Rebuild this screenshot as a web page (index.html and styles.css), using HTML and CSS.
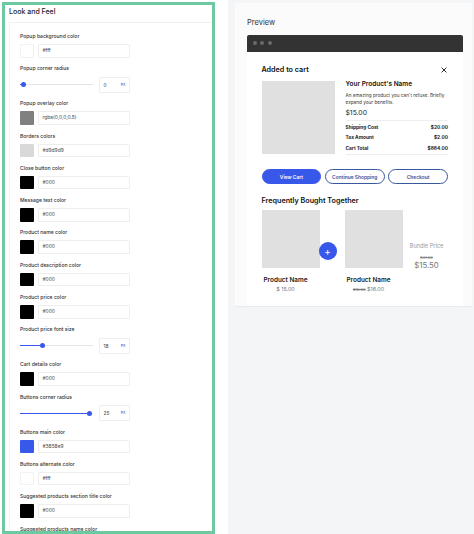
FILE: index.html
```html
<!DOCTYPE html>
<html lang="en">
<head>
  <meta charset="UTF-8" />
  <title>Look and Feel</title>
  <link rel="stylesheet" href="styles.css">
</head>
<body>
  <div class="page">
    <section class="settings">
      <h2 class="settings-title">Look and Feel</h2>
      <div class="settings-body">
        <div class="field">
          <label>Popup background color</label>
          <div class="color-row"><span class="swatch swatch-white"></span><span class="text-input">#fff</span></div>
        </div>
        <div class="field field-range">
          <label>Popup corner radius</label>
          <div class="range-row">
            <div class="track"><span class="fill fill-0"></span><span class="thumb"></span></div>
            <div class="px-input"><span>0</span><span class="unit">PX</span></div>
          </div>
        </div>
        <div class="field">
          <label>Popup overlay color</label>
          <div class="color-row"><span class="swatch swatch-overlay"></span><span class="text-input">rgba(0,0,0,0.5)</span></div>
        </div>
        <div class="field">
          <label>Borders colors</label>
          <div class="color-row"><span class="swatch swatch-border"></span><span class="text-input">#d9d9d9</span></div>
        </div>
        <div class="field">
          <label>Close button color</label>
          <div class="color-row"><span class="swatch"></span><span class="text-input">#000</span></div>
        </div>
        <div class="field">
          <label>Message text color</label>
          <div class="color-row"><span class="swatch"></span><span class="text-input">#000</span></div>
        </div>
        <div class="field">
          <label>Product name color</label>
          <div class="color-row"><span class="swatch"></span><span class="text-input">#000</span></div>
        </div>
        <div class="field">
          <label>Product description color</label>
          <div class="color-row"><span class="swatch"></span><span class="text-input">#000</span></div>
        </div>
        <div class="field">
          <label>Product price color</label>
          <div class="color-row"><span class="swatch"></span><span class="text-input">#000</span></div>
        </div>
        <div class="field field-range">
          <label>Product price font size</label>
          <div class="range-row">
            <div class="track"><span class="fill fill-30"></span><span class="thumb"></span></div>
            <div class="px-input"><span>18</span><span class="unit">PX</span></div>
          </div>
        </div>
        <div class="field">
          <label>Cart details color</label>
          <div class="color-row"><span class="swatch"></span><span class="text-input">#000</span></div>
        </div>
        <div class="field field-range">
          <label>Buttons corner radius</label>
          <div class="range-row">
            <div class="track"><span class="fill fill-100"></span><span class="thumb"></span></div>
            <div class="px-input"><span>25</span><span class="unit">PX</span></div>
          </div>
        </div>
        <div class="field">
          <label>Buttons main color</label>
          <div class="color-row"><span class="swatch swatch-blue"></span><span class="text-input">#3858e9</span></div>
        </div>
        <div class="field">
          <label>Buttons alternate color</label>
          <div class="color-row"><span class="swatch swatch-white"></span><span class="text-input">#fff</span></div>
        </div>
        <div class="field">
          <label>Suggested products section title color</label>
          <div class="color-row"><span class="swatch"></span><span class="text-input">#000</span></div>
        </div>
        <div class="field field-last">
          <label>Suggested products name color</label>
        </div>
      </div>
    </section>

    <section class="preview-area">
      <div class="preview">
        <h2 class="preview-title">Preview</h2>
        <div class="window">
          <div class="window-bar"><span></span><span></span><span></span></div>
          <div class="popup">
            <div class="popup-head">
              <h3>Added to cart</h3>
              <svg class="close" viewBox="0 0 10 10" width="6" height="6"><path d="M1 1l8 8M9 1l-8 8" stroke="#111" stroke-width="1.5" fill="none"/></svg>
            </div>
            <div class="product">
              <div class="placeholder product-image"></div>
              <div class="product-info">
                <h4>Your Product's Name</h4>
                <p class="desc">An amazing product you can't refuse. Briefly expand your benefits.</p>
                <p class="price">$15.00</p>
                <div class="totals">
                  <div class="total-row"><span>Shipping Cost</span><span>$20.00</span></div>
                  <div class="total-row"><span>Tax Amount</span><span>$2.00</span></div>
                  <div class="total-row"><span>Cart Total</span><span>$884.00</span></div>
                </div>
              </div>
            </div>
            <div class="buttons">
              <button class="btn btn-main">View Cart</button>
              <button class="btn">Continue Shopping</button>
              <button class="btn">Checkout</button>
            </div>
            <h3 class="together">Frequently Bought Together</h3>
            <div class="bundle">
              <div class="bundle-item">
                <div class="placeholder bundle-image"></div>
                <div class="bundle-name">Product Name</div>
                <div class="bundle-price">$ 15.00</div>
                <span class="plus">+</span>
              </div>
              <div class="bundle-item bundle-item-last">
                <div class="placeholder bundle-image"></div>
                <div class="bundle-name">Product Name</div>
                <div class="bundle-price"><s>$18.00</s> $16.00</div>
              </div>
              <div class="bundle-total">
                <div class="bundle-label">Bundle Price</div>
                <s class="bundle-was">$31.00</s>
                <div class="bundle-sum">$15.50</div>
              </div>
            </div>
          </div>
        </div>
      </div>
    </section>
  </div>
</body>
</html>
```

FILE: styles.css
```css
* {
  box-sizing: border-box;
}

body {
  margin: 0;
  height: 534px;
  overflow: hidden;
  background: #fff;
  font-family: Inter, "Liberation Sans", sans-serif;
  color: #1e1e1e;
}

.page {
  display: flex;
  height: 534px;
  overflow: hidden;
}

.settings {
  flex: none;
  width: 213px;
  height: 532px;
  margin: 2px 0 0 2px;
  border: 3px solid #6fc9a0;
  overflow: hidden;
  background: #fff;
}

.settings-title {
  margin: 0;
  height: 17px;
  padding: 2px 0 0 4px;
  font-size: 7px;
  line-height: 10px;
  font-weight: 500;
}

.settings-body {
  margin-left: 4px;
  padding: 10px 0 0 10px;
  border-top: 1px solid #f0f0f0;
  border-left: 1px solid #f4f4f4;
}

.field {
  margin-bottom: 7.8px;
}

.field-range {
  margin-bottom: 7px;
}

.field-last {
  margin-bottom: 0;
}

.field label {
  display: block;
  height: 7px;
  margin-bottom: 4px;
  font-size: 5.05px;
  line-height: 7px;
  font-weight: 500;
  color: #333;
  white-space: nowrap;
}

.color-row {
  display: flex;
  gap: 4px;
}

.swatch {
  flex: none;
  width: 13.5px;
  height: 13.5px;
  border-radius: 1px;
  background: #000;
}

.swatch-white {
  background: #fff;
  border: 1px solid #f2f2f2;
}

.swatch-overlay {
  background: #808080;
}

.swatch-border {
  background: #d9d9d9;
}

.swatch-blue {
  background: #3858e9;
}

.text-input {
  width: 92.5px;
  height: 13.5px;
  padding-left: 4px;
  border: 1px solid #eeeeee;
  border-radius: 1px;
  font-size: 4.9px;
  line-height: 11.5px;
  color: #444;
}

.range-row {
  display: flex;
  align-items: center;
  gap: 6px;
  height: 17px;
}

.track {
  position: relative;
  width: 72.5px;
  height: 1px;
  background: #e4e4e4;
}

.fill {
  display: block;
  height: 1px;
  background: #3858e9;
}

.fill-0 {
  width: 3px;
}

.fill-30 {
  width: 22px;
}

.fill-100 {
  width: 69px;
}

.thumb {
  position: absolute;
  top: -2px;
  width: 5px;
  height: 5px;
  border-radius: 50%;
  background: #3858e9;
}

.fill-0 + .thumb {
  left: 1px;
}

.fill-30 + .thumb {
  left: 19.5px;
}

.fill-100 + .thumb {
  left: 66.5px;
}

.px-input {
  display: flex;
  justify-content: space-between;
  align-items: center;
  width: 31px;
  height: 16px;
  padding: 0 3px 0 4px;
  border: 1px solid #eeeeee;
  border-radius: 1px;
  font-size: 4.9px;
  color: #444;
}

.unit {
  font-size: 3.4px;
  font-weight: 600;
  color: #5b75c9;
}

.preview-area {
  flex: 1;
  min-width: 0;
  margin-left: 13px;
  padding: 3px 2px 0 7px;
  background: #f4f5f7;
}

.preview {
  height: 304px;
  padding: 15px 9px 0 12px;
  background: #fbfbfc;
  border-bottom: 1px solid #e8eaec;
}

.preview-title {
  margin: 0 0 8px;
  height: 9px;
  font-size: 7.5px;
  line-height: 9px;
  font-weight: 400;
  color: #333;
}

.window {
  height: 271px;
  background: #fff;
}

.window-bar {
  display: flex;
  align-items: center;
  gap: 3.3px;
  height: 16.5px;
  padding-left: 6px;
  background: #333;
  border-radius: 2px 2px 0 0;
}

.window-bar span {
  width: 4px;
  height: 4px;
  border-radius: 50%;
  background: #6b6b6b;
}

.popup {
  padding: 12.5px 15px 0 14.5px;
  background: #fff;
}

.popup-head {
  display: flex;
  justify-content: space-between;
  align-items: center;
  height: 12px;
  margin-bottom: 4.5px;
}

.popup-head h3,
.together {
  margin: 0;
  font-size: 7.2px;
  line-height: 12px;
  font-weight: 600;
  color: #111;
}

.close {
  margin-right: 1px;
}

.product {
  display: flex;
  gap: 11px;
}

.placeholder {
  background: #e0e0e0;
}

.product-image {
  flex: none;
  width: 73px;
  height: 73px;
}

.product-info {
  flex: 1;
  min-width: 0;
}

.product-info h4 {
  margin: 0 0 4.5px;
  font-size: 6.5px;
  line-height: 7px;
  font-weight: 600;
  color: #111;
}

.desc {
  margin: 0 0 1.8px;
  font-size: 4.7px;
  line-height: 7px;
  color: #333;
}

.price {
  margin: 0 0 2px;
  font-size: 6.8px;
  line-height: 10px;
  color: #222;
}

.totals {
  padding: 1.2px 0 1.5px;
  border-top: 1px solid #eee;
  border-bottom: 1px solid #eee;
}

.total-row {
  display: flex;
  justify-content: space-between;
  font-size: 4.8px;
  line-height: 10.3px;
  font-weight: 700;
  color: #222;
}

.buttons {
  display: flex;
  gap: 3.5px;
  margin-top: 14px;
}

.btn {
  width: 60px;
  height: 15px;
  padding: 0;
  background: #fff;
  border: 0.7px solid #3858a0;
  border-radius: 8px;
  font-family: inherit;
  font-size: 4.9px;
  font-weight: 600;
  color: #3a4f9a;
}

.btn-main {
  background: #3858e9;
  border-color: #3858e9;
  color: #fff;
}

.together {
  margin-top: 10.5px;
  margin-bottom: 3.5px;
}

.bundle {
  display: flex;
}

.bundle-item {
  position: relative;
  flex: none;
  width: 83px;
}

.bundle-item-last {
  width: 60px;
}

.bundle-image {
  width: 58px;
  height: 58px;
}

.bundle-name {
  margin: 8px 0 0 2px;
  width: 46px;
  font-size: 6.4px;
  line-height: 9px;
  font-weight: 600;
  white-space: nowrap;
  color: #222;
}

.bundle-price {
  width: 48px;
  font-size: 5.4px;
  line-height: 8px;
  text-align: center;
  white-space: nowrap;
  color: #777;
}

.bundle-price s {
  font-size: 4px;
}

.plus {
  position: absolute;
  left: 57px;
  top: 32px;
  width: 18px;
  height: 18px;
  border-radius: 50%;
  background: #3858e9;
  color: #fff;
  font-size: 10px;
  line-height: 18px;
  text-align: center;
}

.bundle-total {
  flex: none;
  width: 44px;
  padding-top: 31.7px;
  text-align: center;
}

.bundle-label {
  margin-bottom: 5px;
  font-size: 5.6px;
  line-height: 8px;
  white-space: nowrap;
  color: #999;
}

.bundle-was {
  display: block;
  font-size: 4px;
  line-height: 5px;
  color: #888;
}

.bundle-sum {
  margin-top: 1px;
  font-size: 7.8px;
  line-height: 8px;
  color: #777;
}
```
